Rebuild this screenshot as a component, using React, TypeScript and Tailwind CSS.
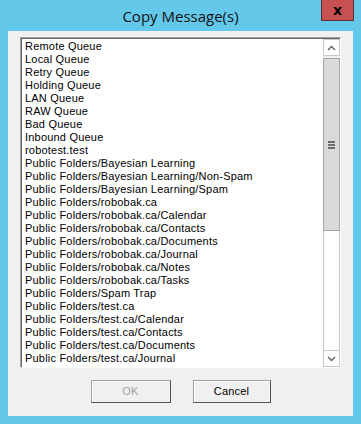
import React from 'react';

const items = [
  'Remote Queue',
  'Local Queue',
  'Retry Queue',
  'Holding Queue',
  'LAN Queue',
  'RAW Queue',
  'Bad Queue',
  'Inbound Queue',
  'robotest.test',
  'Public Folders/Bayesian Learning',
  'Public Folders/Bayesian Learning/Non-Spam',
  'Public Folders/Bayesian Learning/Spam',
  'Public Folders/robobak.ca',
  'Public Folders/robobak.ca/Calendar',
  'Public Folders/robobak.ca/Contacts',
  'Public Folders/robobak.ca/Documents',
  'Public Folders/robobak.ca/Journal',
  'Public Folders/robobak.ca/Notes',
  'Public Folders/robobak.ca/Tasks',
  'Public Folders/Spam Trap',
  'Public Folders/test.ca',
  'Public Folders/test.ca/Calendar',
  'Public Folders/test.ca/Contacts',
  'Public Folders/test.ca/Documents',
  'Public Folders/test.ca/Journal',
];

function ScrollBar() {
  return (
    <div className="flex w-[17px] flex-col bg-[#f0f0f0]">
      {/* up arrow */}
      <div className="flex h-[17px] items-center justify-center border border-[#c7c7c7] bg-white">
        <svg width="9" height="6" viewBox="0 0 9 6">
          <path d="M1 5 L4.5 1.5 L8 5" fill="none" stroke="#606060" strokeWidth="1.4" />
        </svg>
      </div>
      {/* thumb */}
      <div className="mt-[2px] flex h-[173px] items-center justify-center border border-[#a6a6a6] bg-[#dadada]">
        <div className="flex flex-col gap-[1px]">
          <div className="h-[2px] w-[7px] bg-[#6d6d6d]" />
          <div className="h-[2px] w-[7px] bg-[#6d6d6d]" />
          <div className="h-[2px] w-[7px] bg-[#6d6d6d]" />
        </div>
      </div>
      <div className="flex-1 border-x border-[#c7c7c7] bg-white" />
      {/* down arrow */}
      <div className="flex h-[17px] items-center justify-center border border-[#c7c7c7] bg-white">
        <svg width="9" height="6" viewBox="0 0 9 6">
          <path d="M1 1 L4.5 4.5 L8 1" fill="none" stroke="#606060" strokeWidth="1.4" />
        </svg>
      </div>
    </div>
  );
}

export default function App() {
  return (
    <div className="flex h-[424px] w-[361px] flex-col bg-[#63c8e9] font-['Liberation_Sans',Arial,sans-serif]">
      {/* title bar */}
      <div className="relative flex h-[31px] items-center justify-center">
        <span className="pt-[1px] font-['Open_Sans',sans-serif] text-[15px] text-[#111]">Copy Message(s)</span>
        <div className="absolute right-[7px] top-0 flex h-[21px] w-[33px] items-center justify-center border border-[#5c3030] border-t-0 bg-[#c75050]">
          <span className="font-['DejaVu_Sans',sans-serif] text-[14px] font-bold leading-none text-black">x</span>
        </div>
      </div>

      {/* client area */}
      <div className="mx-[8px] flex h-[385px] flex-col bg-[#f0f0f0] px-[12px] pt-[6px]">
        <div className="flex h-[331px] border-l border-t border-[#a0a0a0] border-b-white border-r-white border-b border-r">
          <div className="flex flex-1 border-l border-t border-[#696969] bg-white">
            <div className="flex-1 overflow-hidden pl-[3px] pt-[1px]">
              {items.map((it) => (
                <div key={it} className="h-[13px] whitespace-nowrap text-[11px] leading-[13px] tracking-[0.2px] text-black">
                  {it}
                </div>
              ))}
            </div>
            <ScrollBar />
          </div>
        </div>

        <div className="mt-[12px] flex justify-center gap-[22px]">
          <button
            disabled
            className="h-[23px] w-[80px] border border-[#a0a0a0] border-b-[#555] border-r-[#555] bg-[#f0f0f0] text-[11px] tracking-[0.2px] text-[#a0a0a0] shadow-[inset_1px_1px_0_#fff]"
          >
            OK
          </button>
          <button className="h-[23px] w-[78px] border border-[#a0a0a0] border-b-[#555] border-r-[#555] bg-[#f0f0f0] text-[11px] tracking-[0.2px] text-black shadow-[inset_1px_1px_0_#fff]">
            Cancel
          </button>
        </div>
      </div>
    </div>
  );
}
